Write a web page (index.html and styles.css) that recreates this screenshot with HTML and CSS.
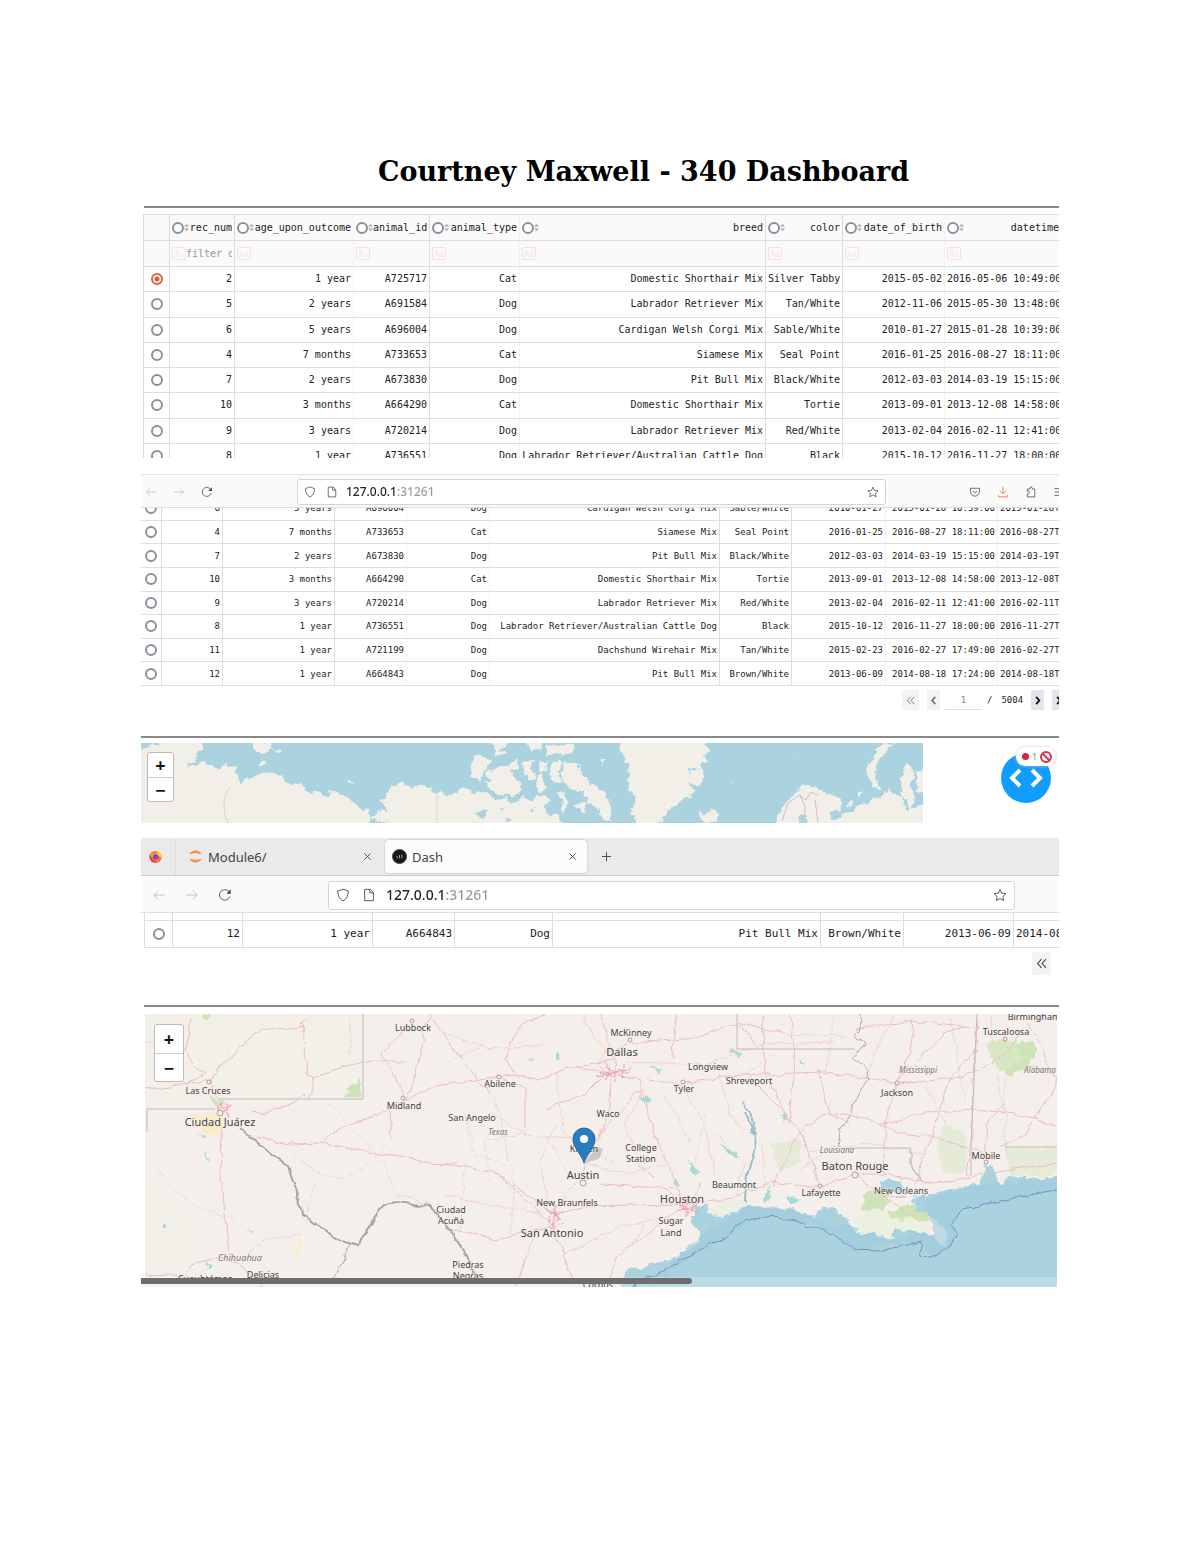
FILE: index.html
```html
<!DOCTYPE html>
<html lang="en">
<head>
<meta charset="utf-8">
<title>Courtney Maxwell - 340 Dashboard</title>
<link rel="stylesheet" href="styles.css">
</head>
<body>
<svg class="sprite" width="0" height="0" aria-hidden="true">
  <filter id="coast" x="0" y="0" width="1" height="1"><feTurbulence type="fractalNoise" baseFrequency=".13" numOctaves="3" seed="4"/><feDisplacementMap in="SourceGraphic" scale="9" xChannelSelector="R" yChannelSelector="G"/></filter>
  <filter id="wiggle" x="0" y="0" width="1" height="1"><feTurbulence type="fractalNoise" baseFrequency=".07" numOctaves="3" seed="9"/><feDisplacementMap in="SourceGraphic" scale="7" xChannelSelector="R" yChannelSelector="G"/></filter>
  <symbol id="back" viewBox="0 0 16 16"><path d="M14.500 8H2M7 3L2 8l5 5"/></symbol>
  <symbol id="forward" viewBox="0 0 16 16"><path d="M1.500 8H14M9 3l5 5-5 5"/></symbol>
  <symbol id="reload" viewBox="0 0 16 16"><path d="M13.500 9.500A6 6 0 1 1 12.300 4L14 6"/><path d="M14.500 1.500V6.500H9.500z" fill="currentColor" stroke="none"/></symbol>
  <symbol id="shield" viewBox="0 0 16 16"><path d="M8 1.300L14 3.500C14 9 12 12.800 8 14.800 4 12.800 2 9 2 3.500z"/></symbol>
  <symbol id="file" viewBox="0 0 16 16"><path d="M3 1.500H9.500L13 5V14.500H3z M9 1.500V5.500H13"/></symbol>
  <symbol id="star" viewBox="0 0 16 16"><path d="M8 1.500l2 4.300 4.700.6-3.400 3.200.9 4.700L8 12l-4.200 2.300.9-4.700L1.300 6.400 6 5.800z"/></symbol>
</svg>
<main class="page">
  <h1>Courtney Maxwell - 340 Dashboard</h1>
  <hr class="inset">

  <section class="clip clip-records">
    <table class="data records">
      <colgroup><col><col><col><col><col><col><col><col><col></colgroup>
      <thead>
        <tr>
          <th></th>
          <th><div class="head"><button class="ring" aria-label="Toggle rec_num"></button><button class="sort" aria-label="Sort rec_num"></button><span>rec_num</span></div></th>
          <th><div class="head"><button class="ring" aria-label="Toggle age"></button><button class="sort" aria-label="Sort age"></button><span>age_upon_outcome</span></div></th>
          <th><div class="head"><button class="ring" aria-label="Toggle id"></button><button class="sort" aria-label="Sort id"></button><span>animal_id</span></div></th>
          <th><div class="head"><button class="ring" aria-label="Toggle type"></button><button class="sort" aria-label="Sort type"></button><span>animal_type</span></div></th>
          <th><div class="head"><button class="ring" aria-label="Toggle breed"></button><button class="sort" aria-label="Sort breed"></button><span>breed</span></div></th>
          <th><div class="head"><button class="ring" aria-label="Toggle color"></button><button class="sort" aria-label="Sort color"></button><span>color</span></div></th>
          <th><div class="head"><button class="ring" aria-label="Toggle birth date"></button><button class="sort" aria-label="Sort birth date"></button><span>date_of_birth</span></div></th>
          <th><div class="head"><button class="ring" aria-label="Toggle datetime"></button><button class="sort" aria-label="Sort datetime"></button><span>datetime</span></div></th>
        </tr>
        <tr class="filters">
          <th></th>
          <th><div class="head"><button class="case">Aa</button><input type="text" aria-label="Filter rec_num" placeholder="filter data..."></div></th>
          <th><div class="head"><button class="case">Aa</button><input type="text" aria-label="Filter age"></div></th>
          <th><div class="head"><button class="case">Aa</button><input type="text" aria-label="Filter id"></div></th>
          <th><div class="head"><button class="case">Aa</button><input type="text" aria-label="Filter type"></div></th>
          <th><div class="head"><button class="case">Aa</button><input type="text" aria-label="Filter breed"></div></th>
          <th><div class="head"><button class="case">Aa</button><input type="text" aria-label="Filter color"></div></th>
          <th><div class="head"><button class="case">Aa</button><input type="text" aria-label="Filter birth date"></div></th>
          <th><div class="head"><button class="case">Aa</button><input type="text" aria-label="Filter datetime"></div></th>
        </tr>
      </thead>
      <tbody>
        <tr><td><input type="radio" name="a" aria-label="Row 2" checked></td><td>2</td><td>1 year</td><td>A725717</td><td>Cat</td><td>Domestic Shorthair Mix</td><td>Silver Tabby</td><td>2015-05-02</td><td>2016-05-06 10:49:00</td></tr>
        <tr><td><input type="radio" name="a" aria-label="Row 5"></td><td>5</td><td>2 years</td><td>A691584</td><td>Dog</td><td>Labrador Retriever Mix</td><td>Tan/White</td><td>2012-11-06</td><td>2015-05-30 13:48:00</td></tr>
        <tr><td><input type="radio" name="a" aria-label="Row 6"></td><td>6</td><td>5 years</td><td>A696004</td><td>Dog</td><td>Cardigan Welsh Corgi Mix</td><td>Sable/White</td><td>2010-01-27</td><td>2015-01-28 10:39:00</td></tr>
        <tr><td><input type="radio" name="a" aria-label="Row 4"></td><td>4</td><td>7 months</td><td>A733653</td><td>Cat</td><td>Siamese Mix</td><td>Seal Point</td><td>2016-01-25</td><td>2016-08-27 18:11:00</td></tr>
        <tr><td><input type="radio" name="a" aria-label="Row 7"></td><td>7</td><td>2 years</td><td>A673830</td><td>Dog</td><td>Pit Bull Mix</td><td>Black/White</td><td>2012-03-03</td><td>2014-03-19 15:15:00</td></tr>
        <tr><td><input type="radio" name="a" aria-label="Row 10"></td><td>10</td><td>3 months</td><td>A664290</td><td>Cat</td><td>Domestic Shorthair Mix</td><td>Tortie</td><td>2013-09-01</td><td>2013-12-08 14:58:00</td></tr>
        <tr><td><input type="radio" name="a" aria-label="Row 9"></td><td>9</td><td>3 years</td><td>A720214</td><td>Dog</td><td>Labrador Retriever Mix</td><td>Red/White</td><td>2013-02-04</td><td>2016-02-11 12:41:00</td></tr>
        <tr><td><input type="radio" name="a" aria-label="Row 8"></td><td>8</td><td>1 year</td><td>A736551</td><td>Dog</td><td>Labrador Retriever/Australian Cattle Dog</td><td>Black</td><td>2015-10-12</td><td>2016-11-27 18:00:00</td></tr>
      </tbody>
    </table>
  </section>

  <section class="window">
    <div class="toolbar">
      <nav class="nav"><button aria-label="Back" disabled><svg><use href="#back"/></svg></button><button aria-label="Forward" disabled><svg><use href="#forward"/></svg></button><button aria-label="Reload"><svg><use href="#reload"/></svg></button></nav>
      <div class="address"><svg><use href="#shield"/></svg><svg><use href="#file"/></svg><input type="text" aria-label="Address" value="127.0.0.1:31261"><button aria-label="Bookmark"><svg><use href="#star"/></svg></button></div>
      <div class="tools">
        <button aria-label="Pocket"><svg viewBox="0 0 16 16"><path d="M2 3h12v4c0 4-3 6.500-6 6.500S2 11 2 7zM5 6.500l3 3 3-3"/></svg></button>
        <button class="download" aria-label="Downloads"><svg viewBox="0 0 16 16"><path d="M8 1v9M4 6.500l4 4 4-4M2 12v2.500h12V12"/></svg></button>
        <button aria-label="Extensions"><svg viewBox="0 0 16 16"><path d="M3 14.500V10.500h1.500a1.800 1.800 0 0 0 0-3.500H3V4h3.500V3a1.600 1.600 0 0 1 3.200 0v1H13v10.500z"/></svg></button>
        <button aria-label="Menu"><svg viewBox="0 0 16 16"><path d="M2 3.500h12M2 8h12M2 12.500h12"/></svg></button>
      </div>
    </div>
    <div class="clip clip-scrolled">
      <table class="data scrolled">
        <colgroup><col><col><col><col><col><col><col><col><col><col></colgroup>
        <tbody>
          <tr><td><input type="radio" name="b" aria-label="Row 6"></td><td>6</td><td>5 years</td><td>A696004</td><td>Dog</td><td>Cardigan Welsh Corgi Mix</td><td>Sable/White</td><td>2010-01-27</td><td>2015-01-28 10:39:00</td><td>2015-01-28T</td></tr>
          <tr><td><input type="radio" name="b" aria-label="Row 4"></td><td>4</td><td>7 months</td><td>A733653</td><td>Cat</td><td>Siamese Mix</td><td>Seal Point</td><td>2016-01-25</td><td>2016-08-27 18:11:00</td><td>2016-08-27T</td></tr>
          <tr><td><input type="radio" name="b" aria-label="Row 7"></td><td>7</td><td>2 years</td><td>A673830</td><td>Dog</td><td>Pit Bull Mix</td><td>Black/White</td><td>2012-03-03</td><td>2014-03-19 15:15:00</td><td>2014-03-19T</td></tr>
          <tr><td><input type="radio" name="b" aria-label="Row 10"></td><td>10</td><td>3 months</td><td>A664290</td><td>Cat</td><td>Domestic Shorthair Mix</td><td>Tortie</td><td>2013-09-01</td><td>2013-12-08 14:58:00</td><td>2013-12-08T</td></tr>
          <tr><td><input type="radio" name="b" aria-label="Row 9"></td><td>9</td><td>3 years</td><td>A720214</td><td>Dog</td><td>Labrador Retriever Mix</td><td>Red/White</td><td>2013-02-04</td><td>2016-02-11 12:41:00</td><td>2016-02-11T</td></tr>
          <tr><td><input type="radio" name="b" aria-label="Row 8"></td><td>8</td><td>1 year</td><td>A736551</td><td>Dog</td><td>Labrador Retriever/Australian Cattle Dog</td><td>Black</td><td>2015-10-12</td><td>2016-11-27 18:00:00</td><td>2016-11-27T</td></tr>
          <tr><td><input type="radio" name="b" aria-label="Row 11"></td><td>11</td><td>1 year</td><td>A721199</td><td>Dog</td><td>Dachshund Wirehair Mix</td><td>Tan/White</td><td>2015-02-23</td><td>2016-02-27 17:49:00</td><td>2016-02-27T</td></tr>
          <tr><td><input type="radio" name="b" aria-label="Row 12"></td><td>12</td><td>1 year</td><td>A664843</td><td>Dog</td><td>Pit Bull Mix</td><td>Brown/White</td><td>2013-06-09</td><td>2014-08-18 17:24:00</td><td>2014-08-18T</td></tr>
        </tbody>
      </table>
    </div>
    <div class="pager">
      <button class="wide" aria-label="First page" disabled><svg viewBox="0 0 10 10"><path d="M5 1L1.500 5 5 9M9 1L5.500 5 9 9"/></svg></button>
      <button aria-label="Previous page" disabled><svg viewBox="0 0 10 10"><path d="M7 1L3.500 5 7 9"/></svg></button>
      <div class="count"><input type="text" aria-label="Page" value="1"><span>/</span><span>5004</span></div>
      <button class="next" aria-label="Next page"><svg viewBox="0 0 10 10"><path d="M3.500 1L7 5 3.500 9"/></svg></button>
      <button class="next" aria-label="Last page"><svg viewBox="0 0 10 10"><path d="M3.500 1L7 5 3.500 9"/></svg></button>
    </div>
    <hr>
    <div class="world-row">
      <div class="map world">
        <svg viewBox="0 0 782 80" preserveAspectRatio="xMinYMin slice" role="img" aria-label="World map">
          <rect width="782" height="80" fill="#aad3df"/>
          <g filter="url(#coast)">
          <rect x="-10" y="-10" width="802" height="100" fill="#aad3df"/>
          <g class="land">
            <g transform="translate(-1 -102.667) scale(.33333)">
              <path d="M-30 345L25 318 50 316 60 290H186V330L165 350 182 368 215 374 245 386 255 370 285 378 290 408 303 430 320 412 355 414 370 392 425 405 440 430 490 432 500 455 545 458 570 448 605 460 640 485 665 505 695 520 682 548 620 560 600 590H-30z"/>
              <path d="M720 480L745 462 750 442 785 424 805 436 865 440 895 456 920 466 955 452 975 440 1000 458 1030 454 1060 475 1100 474 1120 490 1145 470 1180 480 1210 462 1225 480 1212 510 1230 535 1250 520 1275 552 1275 590H700V550L750 542 690 535 720 510 745 515z"/>
              <path d="M1000 348L1030 350 1055 364 1040 385 1020 422 998 410 992 380zM1045 392L1085 378 1130 360 1135 385 1110 390 1140 425 1145 450 1130 462 1090 468 1060 450 1035 425 1055 415 1035 400zM1150 370L1180 364 1172 385 1187 405 1176 418 1154 400zM1195 362L1226 360 1218 390 1195 388zM1190 410L1208 400 1216 450 1192 452 1182 430zM1240 368L1262 360 1255 400 1270 425 1243 430 1230 402zM1270 366L1315 372 1325 400 1350 420 1410 482V545L1385 510 1345 490 1330 455 1290 445 1262 410zM1220 315H1298V340L1220 345zM1160 290H1205V330H1165zM1040 290H1120L1080 330 1110 340 1060 345 1070 325zM1205 290H1300V306H1210zM340 308H390L395 325 375 340 345 335zM400 325L432 333 420 342 400 335zM365 355L382 372 362 375zM620 425L632 415 643 422 625 430zM1250 455L1275 450 1285 500 1265 520 1270 490zM1300 495L1340 480 1335 520 1315 510z"/>
            </g>
            <g transform="translate(459 -102.667) scale(.33333)">
              <path d="M62 290H320V318L332 330 312 350 325 365 300 370 310 395 305 440 262 428 290 455 235 485 205 515 180 552 180 590H118V552L95 520 105 480 88 430 84 370 60 325zM0 360L10 355 5 380zM88 430L108 435 103 458 90 450zM0 470L40 510 20 540 0 520zM292 518L320 515 345 512 360 530 340 545 305 542zM515 590L525 552 550 500 575 465 610 432 650 430 655 450 700 465 725 485 720 515 685 510 690 540 720 530 800 485 815 468 850 475 860 450 885 455 905 475 920 510 1000 485V590zM798 405L815 350 850 310 890 308 845 345 828 380 830 430 850 445 838 452 820 430zM903 415L920 372 938 380 935 440 945 470 935 510 918 480 905 470zM945 395L1000 370V470L955 455z"/>
              <path d="M740 480L755 475 762 500 745 505zM775 462L788 458 785 472zM575 345L585 347 580 351zM390 425L402 427 394 431z"/>
            </g>
          </g>
          <g class="water">
            <g transform="translate(-1 -102.667) scale(.33333)"><path d="M135 385L165 362 185 350 180 368 150 380zM1000 520L1045 505 1030 532zM1080 500L1090 505 1080 510zM1100 530L1120 540 1100 545zM1170 500L1185 510 1175 520zM548 450L568 455 560 468 545 465z"/></g>
            <g transform="translate(459 -102.667) scale(.33333)"><path d="M600 525L622 530 612 560H595zM262 385L300 390 270 398zM265 465L300 440 290 455zM690 520L720 530 700 540z"/></g>
          </g>
          </g>
          <path d="M89 44q-6 8 -6 19 0 10 4 17M296 48V80" fill="none" stroke="#d0d8d6"/>
          <path d="M641 78l6 -18 12 -8 5 12v10M659 53l6 4 5 -8 7 3M674 57l3 22" fill="none" stroke="#d4bdc4"/>
        </svg>
        <div class="zoom"><button aria-label="Zoom in">+</button><button aria-label="Zoom out">−</button></div>
      </div>
      <div class="debug">
        <button class="bubble" aria-label="Debug menu"><svg viewBox="0 0 50 50"><path d="M19 17l-8 8 8 8M31 17l8 8-8 8"/></svg></button>
        <div class="errors"><i></i><span>1</span><svg viewBox="0 0 12 12"><circle cx="6" cy="6" r="5"/><path d="M2.500 2.500l7 7"/></svg></div>
      </div>
    </div>
  </section>

  <section class="window browser">
    <div class="tabs">
      <button class="fox" aria-label="Firefox View"><svg viewBox="0 0 16 16"><circle cx="8" cy="8.500" r="6.500" fill="#ff6a2b"/><path d="M9 1c3 2 6 4 5.500 8.500L10 6z" fill="#ffd23a"/><path d="M2 4l3 1 3-1 3 3-1 5H5z" fill="#ffad28"/><circle cx="8" cy="8.500" r="3" fill="#7b45d8"/><path d="M1.500 6c0 6 3 8.500 7 8.500l-3-3z" fill="#f2314e"/></svg></button>
      <div class="tab"><svg viewBox="0 0 16 16"><path d="M2 5Q8-1 14 5 8 2.500 2 5zM2 11Q8 17 14 11 8 13.500 2 11z" fill="#f0873d" stroke="#f0873d"/></svg><a href="#module">Module6/</a><button aria-label="Close Module6"><svg viewBox="0 0 10 10"><path d="M1.500 1.500l7 7M8.500 1.500l-7 7"/></svg></button></div>
      <div class="tab active"><svg viewBox="0 0 16 16"><circle cx="8" cy="8" r="7.500" fill="#15161a"/><path d="M5.500 10V7.500M8 10V6.500M10.500 10V6" stroke="#a9a4b8"/></svg><a href="#dash">Dash</a><button aria-label="Close Dash"><svg viewBox="0 0 10 10"><path d="M1.500 1.500l7 7M8.500 1.500l-7 7"/></svg></button></div>
      <button class="new" aria-label="New tab"><svg viewBox="0 0 12 12"><path d="M6 1v10M1 6h10"/></svg></button>
    </div>
    <div class="toolbar large">
      <nav class="nav"><button aria-label="Back" disabled><svg><use href="#back"/></svg></button><button aria-label="Forward" disabled><svg><use href="#forward"/></svg></button><button aria-label="Reload"><svg><use href="#reload"/></svg></button></nav>
      <div class="address"><svg><use href="#shield"/></svg><svg><use href="#file"/></svg><input type="text" aria-label="Address" value="127.0.0.1:31261"><button aria-label="Bookmark"><svg><use href="#star"/></svg></button></div>
    </div>
    <div class="clip clip-last">
      <table class="data last">
        <colgroup><col><col><col><col><col><col><col><col><col></colgroup>
        <tbody>
          <tr><td></td><td></td><td></td><td></td><td></td><td></td><td></td><td></td><td></td></tr>
          <tr><td><input type="radio" name="c" aria-label="Row 12"></td><td>12</td><td>1 year</td><td>A664843</td><td>Dog</td><td>Pit Bull Mix</td><td>Brown/White</td><td>2013-06-09</td><td>2014-08-18</td></tr>
        </tbody>
      </table>
    </div>
    <div class="pager tall"><button aria-label="First page" disabled><svg viewBox="0 0 10 10"><path d="M5 1L1.500 5 5 9M9 1L5.500 5 9 9"/></svg></button></div>
    <hr class="inset">
    <div class="map texas">
      <svg viewBox="0 0 912 273" preserveAspectRatio="xMinYMin slice" role="img" aria-label="Map of Texas and the Gulf coast">
        <rect width="912" height="273" fill="#f5efec"/>
        <path d="M0 0H218V85L0 95zM0 160Q60 190 60 273H0z" fill="#f2f0e9"/>
        <path d="M210 0H330L310 80 230 90 218 60z" fill="#f3f0ea" opacity=".7"/>
        <g filter="url(#coast)">
        <rect width="912" height="273" fill="none"/>
        <!-- woodland and desert areas -->
        <g fill="#cfe3b8">
          <path d="M199 84L206 72 216 65V83zM55 0h10l-4 6zM64 82L78 88 74 94zM853 54Q868 38 872 30L890 26V42L882 54 866 62z"/>
          <path d="M798 112L820 116 822 158 798 160 792 125zM627 128L655 124 655 150 632 158zM859 134H922V162H866z" opacity=".4"/>
          <path d="M719 180L740 172 745 190 728 205 718 195zM742 198L782 184 784 206 745 214z"/>
        </g>
        <path d="M43 102L80 96 75 124 56 116zM150 230L160 225 150 245zM82 35l4 4 -4 8z" fill="#fbecc8"/>
        <path d="M840 28l30 -2 8 20 -25 12z" fill="#d6e8c2"/>
        <!-- gulf of mexico -->
        <path d="M474 290L477 262 484 254 495 256 508 249 526 246 540 236 556 228 552 215 545 205 552 192 564 190 562 200 572 202 594 198 603 190 612 194 640 196 660 199 668 204 680 191 700 205 712 219 732 218 752 222 765 214 790 224 800 232 804 218 785 203 778 187 788 178 817 174 836 168 840 152 847 150 850 165 858 170 864 160 872 164 930 164V290z" fill="#aad3df"/>
        <path d="M490 290L540 247 575 227 610 205 640 202 680 216 710 236 736 231 775 228 784 242 805 234 812 220 806 208 818 194 860 187 930 172V164L836 170 780 185 790 220 720 215 640 194 600 192 545 230z" fill="#9ccbe0" opacity=".6"/>
        <path d="M712 203l20 -10 20 14 15 -5 20 18 -30 -3 -8 10 -20 -8 -16 2zM565 194l25 -8 14 2 -12 9 -24 4z" fill="#ecf0e0"/>
        <path d="M735 168l10 -4 12 4 6 10 -12 2 -14 -3zM675 198l16 -3 4 14 -10 6zM768 184l12 -4 2 16 -10 4zM745 222l10 -8 8 6 -10 8z" fill="#a9d2df"/>
        <g fill="#a7d9d5"><path d="M574 130l18 8v6l-8 -2zM540 145l15 13 -4 3zM492 80l15 5 -6 5zM528 170l6 -8 1 10zM583 36l14 2 -4 6zM505 52l10 4 -2 4zM384 44l7 2 -6 2zM411 38l6 5 -4 3zM652 46l10 2 -6 2zM620 180l4 -8 1 14 -5 2zM641 185l8 -3 5 5 -7 2zM17 210h5v6h-4zM52 120l10 2 -2 3zM60 136l6 12 -3 2zM100 216h10v2zM60 249l6 2 -2 3zM635 98l8 8 -4 2z"/></g>
        </g>
        <path d="M0 263H912V273H0z" fill="#fff" opacity=".2"/>
        <g filter="url(#wiggle)">
        <rect width="912" height="273" fill="none"/>
        <path d="M598 88L606 100 610 120 605 110 600 98M606 115q6 10 2 22l-6 22-2 28" fill="none" stroke="#9dbecb" stroke-width="2"/>
        <!-- roads -->
        <g class="roads">
          <path d="M0 75L42 70 64 66M42 70L60 60Q45 50 41 35L45 5M64 66Q78 50 90 40L98 30 120 14Q150 18 158 12L156 10 165 3M158 12L162 60 169 64 163 84M169 64L215 48 260 48M105 100Q140 98 160 80M64 66L73 85 78 100M110 124L145 130 176 129 228 139 262 143 275 148 310 149M176 129L190 115 235 100 262 86 290 72 330 66 365 60 392 65 430 52 470 46M245 98L247 125M262 86L250 60 236 42 260 15M262 86L275 40 280 10 285 2M285 0L320 50 345 80M75 115L76 160 80 200 84 240 92 250 120 273M92 250Q55 235 40 262L0 260"/>
          <path d="M295 149L350 158 392 188 405 200 440 192 530 190 590 184 625 168 660 172 678 172 710 160 740 160 790 170 830 162 870 155 930 147M350 158L405 208 418 240 430 273M405 200L435 165 440 150 455 120 465 95 466 62 460 46M430 52L470 62 494 65 535 70 585 62 617 60 680 58 718 63 755 70 790 66 820 63 860 40 880 15M465 62L452 50 460 40 480 30 500 28 553 24 592 8 640 20M455 120L490 80 500 75M494 65L500 90 514 130 530 165 540 195M535 190L510 165 495 150M540 190L518 208 472 242 462 273M540 195L555 170M455 170L530 175"/>
          <path d="M603 60L630 90 656 118 663 138 675 170M656 118L640 150 628 172M656 118Q680 95 700 100L740 110 785 98 830 95 870 100 930 118M752 67L740 110 738 160M752 67L765 40 769 5M752 67L800 20 820 12M735 110Q760 125 787 122L840 140M787 122L805 65 832 35M787 122L770 170M710 160L728 175 770 205M832 5L828 60 827 120 822 162M840 145L842 110 860 90M855 133L880 120 912 70 890 20 882 10M710 15L740 10 780 8 830 13M645 0L650 30 645 110 620 60 617 0M672 55L685 100 705 110M595 10L610 30M400 0L372 15 360 45 370 60M380 115L380 75 350 60M400 95L440 80 460 60M300 215L350 225 420 210M390 220L370 273M455 0L470 45M530 0L528 45"/>
          <path class="minor" d="M470 46L445 20 440 0M480 48L560 50 620 30 690 28M535 70L560 110 570 160M500 75L480 110 500 160M405 200L395 150 410 110M440 150L480 160 520 150M418 240L470 215 530 200M345 100L380 120 440 125M0 28L40 35M300 20L350 35 400 30M590 184L600 150 570 120M640 20L700 22M663 138L720 130 780 140M750 0L730 40 720 63M845 0L850 40 912 62M860 100L850 60M300 180L340 190 400 200"/>
        </g>
        <g class="faint"><path d="M10 150Q30 190 90 205M145 135Q160 160 200 165 230 150 240 130M170 170L160 210 155 220 120 225 95 250M185 90Q220 130 240 150L250 180 285 190M320 100L330 140 360 150M300 50L340 30M350 80L370 170 365 220M400 120L430 170M570 45L585 100 600 120M618 130L620 170M805 0L820 90M860 60V140M410 60L420 120 470 150M560 100L550 150M500 210L480 240M650 160L690 130M205 0V40M320 150L315 220M380 120L340 125 345 170M520 80L545 130M690 0L680 60M780 70L800 110M630 40L600 60"/></g>
        <g class="towns"><path d="M455 58h30M460 52l20 12M470 48v20M452 62l35 -8M462 56v10M478 50v14M400 195l18 12M403 208l16 -12M410 192v22M530 190l24 6M533 198l20 -8M542 184v20M75 90l10 12M72 96l14 -4M746 183h14M800 175"/><circle cx="409" cy="205" r="5"/><circle cx="542" cy="192" r="6"/><circle cx="78" cy="94" r="5"/></g>
        <!-- borders -->
        <g fill="none" stroke="#b3aab0"><path d="M95 114L120 135 143 152 150 175 158 200 180 217 200 228 213 232 226 212 235 195 250 188 285 192 295 205 310 222 322 245 330 262" stroke="#aaa4a8" stroke-width="2"/><path d="M713 0q8 10 0 16t2 10 -2 12 2 10q12 12 6 20t-10 16 -6 18 -8 12 -2 18M205 232L188 265M766 134L766 150 775 168"/></g>
        <path d="M487 273L540 245 575 226 600 207 625 202 650 208 680 216 710 236 735 237 775 228 776 242 790 243 806 232 812 218 806 211 818 194 860 186 930 172" fill="none" stroke="#7e91b5"/>
        </g>
        <path d="M2 118V95H70M75 85H218V0M592 0V35H710M703 134H766M832 0L826 130V162M860 133H912" fill="none" stroke="#c0bab8"/>
        <g class="dots"><circle cx="267" cy="7" r="2"/><circle cx="485" cy="26" r="2"/><circle cx="354" cy="63" r="2"/><circle cx="258" cy="84" r="2"/><circle cx="538" cy="68" r="2"/><circle cx="64" cy="68" r="2"/><circle cx="752" cy="69" r="2"/><circle cx="860" cy="25" r="2"/><circle cx="841" cy="148" r="2"/><circle cx="710" cy="161" r="3"/><circle cx="438" cy="169" r="3"/><circle cx="675" cy="172" r="2"/><circle cx="75" cy="99" r="3"/></g>
        <g class="label">
          <text x="268" y="17">Lubbock</text><text x="486" y="22">McKinney</text><text x="563" y="56">Longview</text><text x="604" y="70">Shreveport</text><text x="539" y="78">Tyler</text><text x="355" y="73">Abilene</text><text x="259" y="95">Midland</text><text x="327" y="107">San Angelo</text><text x="463" y="103">Waco</text><text x="496" y="137">College</text><text x="496" y="148">Station</text><text x="439" y="138">Killeen</text><text x="589" y="174">Beaumont</text><text x="422" y="192">New Braunfels</text><text x="526" y="210">Sugar</text><text x="526" y="222">Land</text><text x="306" y="199">Ciudad</text><text x="306" y="210">Acuña</text><text x="323" y="254">Piedras</text><text x="323" y="265">Negras</text><text x="63" y="80">Las Cruces</text><text x="118" y="264">Delicias</text><text x="60" y="268">Cuauhtémoc</text><text x="752" y="82">Jackson</text><text x="861" y="21">Tuscaloosa</text><text x="889" y="6">Birmingham</text><text x="841" y="145">Mobile</text><text x="676" y="182">Lafayette</text><text x="756" y="180">New Orleans</text><text x="453" y="274">Corpus</text>
        </g>
        <g class="label city"><text x="477" y="42">Dallas</text><text x="438" y="165">Austin</text><text x="407" y="223">San Antonio</text><text x="537" y="189">Houston</text><text x="710" y="156">Baton Rouge</text><text x="75" y="112">Ciudad Juárez</text></g>
        <g class="label state"><text x="353" y="121">Texas</text><text x="773" y="59">Mississippi</text><text x="895" y="59">Alabama</text><text x="692" y="139">Louisiana</text><text x="95" y="247" class="chi">Chihuahua</text></g>
        <path d="M440 149l12 -16 6 2 -4 10z" fill="#555" opacity=".25"/>
        <path d="M439 149C436 139 428 134 428 125a11 11 0 0 1 22 0c0 9-8 14-11 24z" fill="#2a7cbd" stroke="#236ba8"/><circle cx="439" cy="125" r="4" fill="#fff"/>
      </svg>
      <div class="zoom"><button aria-label="Zoom in">+</button><button aria-label="Zoom out">−</button></div>
    </div>
    <div class="scrollbar"></div>
  </section>
</main>
</body>
</html>
```
FILE: styles.css
```css
* { box-sizing: border-box; }
body { margin: 0; background: #fff; color: #222; font-family: "Noto Sans", sans-serif; }
button { padding: 0; border: 0; background: none; color: inherit; font: inherit; display: flex; align-items: center; justify-content: center; }
input { margin: 0; padding: 0; border: 0; background: none; font: inherit; min-width: 0; border-radius: 0; outline: 0; }
svg { fill: none; stroke: currentColor; }
.sprite { position: absolute; }
.page { max-width: 918px; margin: 0 auto; padding: 152px 0 266px; }

h1 { margin: 0; padding-left: 87px; font: bold 27px/40px "DejaVu Serif", serif; color: #000; text-align: center; white-space: nowrap; }
hr { height: 2px; margin: 0; border: 0; background: #888; }
hr.inset { margin-left: 3px; }
h1 + hr { margin-top: 14px; }

/* data tables */
.clip { overflow: hidden; display: flex; flex-direction: column; }
.clip-records { height: 244px; margin: 6px 0 16px; padding-left: 2px; }
.clip-scrolled { height: 178px; justify-content: flex-end; }
.clip-last { height: 35px; justify-content: flex-end; padding-left: 3px; }
.data { flex: none; table-layout: fixed; border-collapse: separate; border-spacing: 0; font-family: "DejaVu Sans Mono", monospace; line-height: 12px; }
.data td, .data th { padding: 0 2px; border-right: 1px solid #ddd; border-bottom: 1px solid #ddd; text-align: right; font-weight: normal; white-space: nowrap; }
.data td:first-child { text-align: center; }
.data input[type=radio] { appearance: none; display: block; width: 12px; height: 12px; margin: 0 auto; border: 2px solid #8f8f9d; border-radius: 50%; background: #fff; }
.data input[type=radio]:checked { border-color: #e2653a; background: radial-gradient(#e2592d 0 2px, #fff 3px); }

.records { width: 918px; height: 255px; font-size: 10px; border-top: 1px solid #ddd; border-left: 1px solid #ddd; }
.records thead tr { height: 26px; }
.records th { background: #fafafa; }
.records col:nth-child(1) { width: 26px; }
.records col:nth-child(2) { width: 65px; }
.records col:nth-child(3) { width: 119px; }
.records col:nth-child(4) { width: 76px; }
.records col:nth-child(5) { width: 90px; }
.records col:nth-child(6) { width: 246px; }
.records col:nth-child(7) { width: 77px; }
.records col:nth-child(8) { width: 102px; }
.records col:nth-child(9) { width: 117px; }
.records td:nth-child(3), .records td:nth-child(5), .records td:nth-child(8),
.records th:nth-child(3), .records th:nth-child(5), .records th:nth-child(8) { border-right-color: #f2f2f2; }
.head { display: flex; align-items: center; overflow: hidden; }
.head span { margin-left: auto; }
.ring { flex: none; width: 12px; height: 12px; border: 2px solid #8f8f9d; border-radius: 50%; background: #fff; }
.sort { flex: none; width: 5px; height: 8px; background: #b5b5bd; clip-path: polygon(50% 0, 100% 40%, 0 40%, 0 60%, 100% 60%, 50% 100%, 0 60%, 0 40%); }
.case { flex: none; width: 14px; height: 13px; border: 1px solid #fbdde3; border-radius: 2px; color: #fbe3e8; font: 8px/10px "Noto Sans", sans-serif; }
.head input { flex: 1; width: 0; }
.head input::placeholder { color: #999; opacity: 1; }

.scrolled { width: 937px; height: 189px; font-size: 9px; }
.scrolled col:nth-child(1) { width: 21px; }
.scrolled col:nth-child(2) { width: 61px; }
.scrolled col:nth-child(3) { width: 112px; }
.scrolled col:nth-child(4) { width: 72px; }
.scrolled col:nth-child(5) { width: 83px; }
.scrolled col:nth-child(6) { width: 230px; }
.scrolled col:nth-child(7) { width: 72px; }
.scrolled col:nth-child(8) { width: 94px; }
.scrolled col:nth-child(9) { width: 112px; }
.scrolled col:nth-child(10) { width: 80px; }
.scrolled td:nth-child(4), .scrolled td:nth-child(5), .scrolled td:nth-child(8), .scrolled td:nth-child(9) { border-right-color: #f2f2f2; }
.scrolled td:last-child, .last td:last-child { text-align: left; }

.last { width: 928px; font-size: 11px; border-left: 1px solid #ddd; }
.last tr { height: 27px; }
.last col:nth-child(1) { width: 28px; }
.last col:nth-child(2) { width: 70px; }
.last col:nth-child(3) { width: 130px; }
.last col:nth-child(4) { width: 82px; }
.last col:nth-child(5) { width: 98px; }
.last col:nth-child(6) { width: 268px; }
.last col:nth-child(7) { width: 83px; }
.last col:nth-child(8) { width: 110px; }
.last col:nth-child(9) { width: 59px; }

/* browser chrome */
.window { position: relative; overflow: hidden; }
.toolbar { display: flex; align-items: center; height: 34px; padding-top: 2px; border-top: 1px solid #e2e2e2; border-bottom: 1px solid #ddd; background: #fafafa; color: #444; }
.nav { display: flex; flex: none; gap: 16px; width: 156px; padding-left: 4px; }
.nav svg, .address svg, .tools svg { display: block; width: 12px; height: 12px; }
.nav button:disabled { color: #bbb; }
.address { display: flex; align-items: center; flex: none; width: 589px; height: 26px; padding: 0 6px; gap: 10px; border: 1px solid #d4d4d4; border-radius: 3px; background: #fff; }
.address input { flex: 1; font-size: 12px; font-weight: 500; line-height: 20px; color: #333; -webkit-text-fill-color: transparent; background: linear-gradient(90deg, #222 51px, #999 51px) text; }
.address > svg + input { margin-left: -2px; }
.nav button { width: 12px; }
.tools { display: flex; gap: 16px; padding-left: 83px; }
.tools .download { color: #e2653a; }
.toolbar.large { height: 38px; border-top-color: #ccc; }
.large .nav { gap: 19px; width: 187px; padding-left: 11px; }
.large svg, .large .nav button { width: 14px; height: 14px; }
.large .address { width: 687px; height: 29px; padding: 0 7px; gap: 12px; }
.large .address input { font-size: 14px; background: linear-gradient(90deg, #222 59px, #999 59px) text; }

.tabs { display: flex; align-items: center; height: 37px; background: #eaeaea; color: #444; font-size: 13px; }
.fox { width: 35px; height: 36px; margin-right: 1px; border-right: 1px solid #ddd; padding-right: 5px; }
.fox svg { width: 15px; height: 15px; stroke: none; }
.tab { display: flex; align-items: center; width: 202px; height: 33px; padding: 0 10px 0 7px; gap: 5px; border-radius: 4px; }
.tab:nth-child(2) { width: 208px; padding: 0 13px 0 11px; }
.tab > svg { width: 15px; height: 15px; }
.tab a { flex: 1; color: inherit; text-decoration: none; }
.tab button svg { width: 9px; height: 9px; }
.tab.active { background: #fcfcfc; box-shadow: 0 0 2px #aaa; }
.new { width: 38px; height: 20px; }
.new svg { width: 11px; height: 11px; }

.pager { display: flex; align-items: center; height: 50px; padding: 4px 0 26px 761px; font: 9px/12px "DejaVu Sans Mono", monospace; }
.pager button { flex: none; width: 13px; height: 20px; margin-right: 8px; background: #e4e4ea; color: #111; }
.pager button:disabled { background: #f3f3f6; color: #777; }
.pager .wide { width: 17px; }
.pager svg { width: 9px; height: 9px; stroke-width: 2; }
.pager .wide svg, .tall svg { stroke-width: 1; }
.pager .count { display: flex; flex: none; align-items: center; height: 20px; margin: 0 8px 0 -3px; }
.count input { width: 37px; height: 20px; border-bottom: 1px solid #ddd; text-align: center; color: #888; }
.count span { margin-left: 5px; }
.count span:last-child { margin-left: 9px; }
.pager.tall { height: 57px; padding: 4px 8px 30px 0; justify-content: flex-end; }
.tall button:disabled { width: 19px; height: 23px; margin: 0; color: #444; }
.tall svg { width: 11px; height: 11px; }

/* maps */
.world-row { display: flex; padding-top: 5px; }
.map { position: relative; overflow: hidden; }
.map > svg { display: block; width: 100%; height: 100%; }
.world { flex: 1; height: 80px; }
.world > svg { stroke: none; }
.land { fill: #f2efe9; }
.water { fill: #aad3df; }
.zoom { position: absolute; left: 6px; top: 9px; border: 1px solid #bbb; border-radius: 3px; background: #fff; color: #111; font-size: 18px; font-weight: bold; line-height: 20px; overflow: hidden; }
.zoom button { width: 25px; height: 24px; }
.zoom button + button { border-top: 1px solid #ccc; }
.debug { position: relative; width: 136px; padding: 10px 0 0 78px; }
.bubble { width: 50px; height: 50px; border-radius: 50%; background: #119dff; color: #fff; }
.bubble svg { width: 50px; height: 50px; stroke-width: 4; }
.errors { position: absolute; left: 93px; top: 4px; display: flex; align-items: center; justify-content: space-between; width: 40px; height: 19px; padding: 0 4px 0 6px; border-radius: 10px; background: #fff; box-shadow: 0 0 3px #ccc; font-size: 8px; color: #777; }
.errors i { width: 7px; height: 7px; border-radius: 50%; background: #e0213c; }
.errors svg { width: 12px; height: 12px; color: #d8324a; stroke-width: 2; }
.browser { margin-top: 15px; }
.texas { height: 273px; margin: 7px 2px 0 4px; }
.texas > svg { stroke: none; }
.texas .zoom { left: 9px; top: 10px; }
.texas .zoom button { width: 28px; height: 28px; }
.roads { fill: none; stroke: #ecbcc6; }
.roads .minor { stroke: #f1d3d6; }
.faint { fill: none; stroke: #e2d8d4; stroke-dasharray: 4 1; }
.towns { fill: none; stroke: #eb9db4; }
.dots { fill: #f5efec; stroke: #b59aa2; }
.label { font: 9px "Noto Sans", sans-serif; fill: #444; text-anchor: middle; stroke: #f5efec; stroke-width: 1px; paint-order: stroke; }
.city { font-size: 11px; }
.state { font-size: 8px; font-style: italic; fill: #777; }
.chi { font-size: 9px; }
.scrollbar { position: absolute; left: 0; bottom: 3px; width: 60%; height: 6px; border-radius: 0 3px 3px 0; background: #6e6e6e; }
```
